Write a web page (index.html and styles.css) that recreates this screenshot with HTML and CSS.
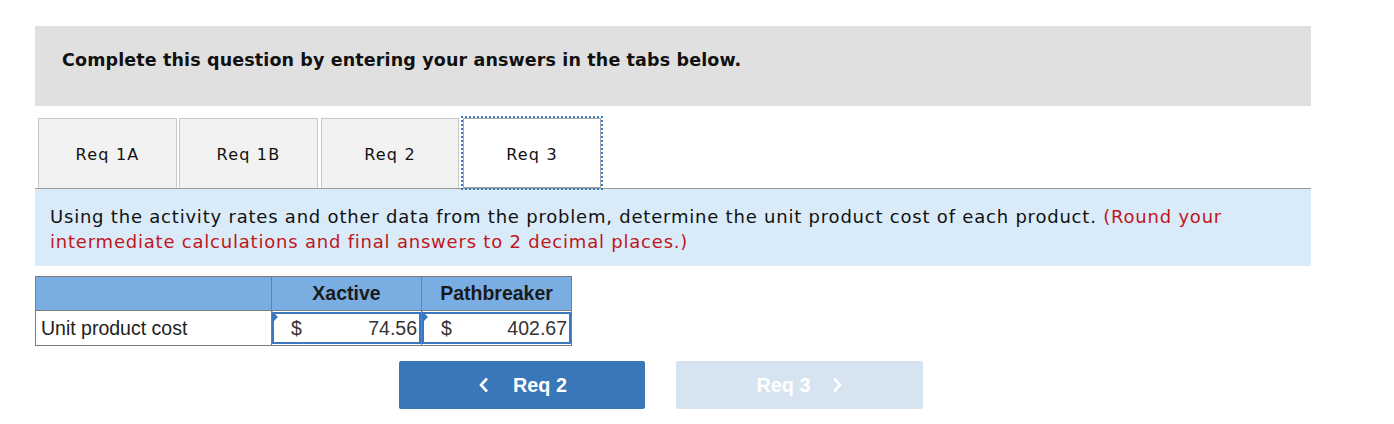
FILE: index.html
```html
<!DOCTYPE html>
<html>
<head>
<meta charset="utf-8">
<link rel="stylesheet" href="styles.css">
</head>
<body>
<div class="wrap">
  <div class="banner">Complete this question by entering your answers in the tabs below.</div>
  <div class="tabs">
    <div class="tab">Req 1A</div>
    <div class="tab">Req 1B</div>
    <div class="tab">Req 2</div>
    <div class="tab active">Req 3</div>
  </div>
  <div class="instr">Using the activity rates and other data from the problem, determine the unit product cost of each product. <span class="red">(Round your intermediate calculations and final answers to 2 decimal places.)</span></div>
  <table class="grid">
    <tr class="head">
      <th class="c1"></th>
      <th class="c2">Xactive</th>
      <th class="c3">Pathbreaker</th>
    </tr>
    <tr>
      <td class="c1 label">Unit product cost</td>
      <td class="c2 inp"><span class="mark"></span><div class="cell"><span>$</span><span>74.56</span></div></td>
      <td class="c3 inp"><span class="mark"></span><div class="cell"><span>$</span><span>402.67</span></div></td>
    </tr>
  </table>
  <div class="nav">
    <div class="btn prev"><svg class="chev left" width="10" height="16" viewBox="0 0 10 16"><polyline points="8,1.5 2,8 8,14.5" fill="none" stroke="#fff" stroke-width="2.6"/></svg>Req 2</div>
    <div class="btn next">Req 3<svg class="chev right" width="10" height="16" viewBox="0 0 10 16"><polyline points="2,1.5 8,8 2,14.5" fill="none" stroke="#fff" stroke-width="2.6"/></svg></div>
  </div>
</div>
</body>
</html>
```
FILE: styles.css
```css
html, body { margin: 0; padding: 0; background: #fff; }
body { font-family: "DejaVu Sans", Verdana, sans-serif; color: #111; }
.wrap { padding: 26px 0 0 35px; width: 1276px; }
.banner {
  background: #e0e0e0; height: 80px; box-sizing: border-box;
  padding: 24px 0 0 27px; font-weight: bold; font-size: 17.5px; letter-spacing: 0.13px; color: #111;
}
.tabs { display: flex; margin-top: 12px; padding-left: 3px; gap: 2px; border-bottom: 1px solid #9a9a9a; height: 70px; }
.tab {
  width: 139px; box-sizing: border-box; height: 70px; background: #f2f2f2;
  border: 1px solid #c8c8c8; border-bottom: none; padding-top: 1px;
  display: flex; align-items: center; justify-content: center; font-size: 16px; letter-spacing: 1.2px; color: #111;
}
.tab:nth-child(3) { width: 138px; margin-left: 1px; }
.tab.active {
  background: #fff; width: 138px; margin-left: 2px; height: 70px; padding-top: 2px;
  border: 1px solid #a8a8a8; outline: 2px dotted #3a77c4; outline-offset: 0;
  position: relative; z-index: 1;
}
.instr {
  background: #d9ebf9; height: 77px; box-sizing: border-box;
  padding: 15px 0 0 15px; font-size: 18px; letter-spacing: 0.79px; line-height: 25px; color: #111;
}
.red { color: #c0161b; }
.grid { border-collapse: collapse; margin-top: 10px; font-family: "Liberation Sans", Arial, sans-serif; font-size: 19.5px; }
.grid th, .grid td { border: 1px solid #7d7d7d; padding: 0; }
.head th { background: #7aaee3; height: 33px; font-weight: bold; color: #1a1a1a; font-size: 19.5px; }
.c1 { width: 230px; }
.c2, .c3 { width: 149px; }
.label { height: 34px; padding-left: 5px !important; text-align: left; color: #222; }
.inp { position: relative; }
.cell {
  display: flex; justify-content: space-between; align-items: center;
  border: 2px solid #3c78bf; height: 32px; box-sizing: border-box; padding: 0 2px 0 17px; color: #333;
}
.mark { position: absolute; left: 0; top: 0; width: 0; height: 0; border-top: 6px solid transparent; border-bottom: 6px solid transparent; border-left: 6px solid #3c78bf; }
.nav { display: flex; gap: 31px; margin-top: 15px; padding-left: 364px; }
.btn {
  width: 246px; height: 48px; border-radius: 2px; display: flex; align-items: center; justify-content: center;
  font-family: "Liberation Sans", Arial, sans-serif; font-weight: bold; font-size: 19.8px; color: #fff;
}
.prev { background: #3a77b9; }
.next { background: #d6e3f1; width: 247px; }
.chev { display: block; margin-top: -1px; }
.left { margin-right: 24px; margin-left: 2px; }
.right { margin-left: 22px; }
```
